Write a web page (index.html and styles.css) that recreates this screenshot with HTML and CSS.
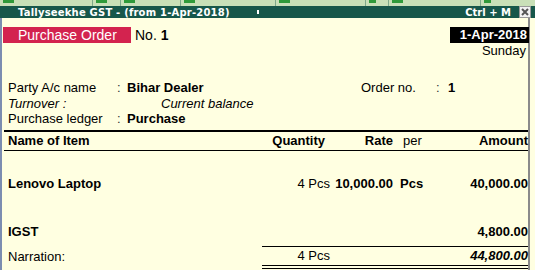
FILE: index.html
```html
<!DOCTYPE html>
<html>
<head>
<meta charset="utf-8">
<link rel="stylesheet" href="styles.css">
</head>
<body>
<div class="window">
  <div class="tabs">
    <span class="tab t1"><i></i></span>
    <span class="tab t2"><i></i></span>
    <span class="tab t3"><i></i></span>
    <span class="tab t4"><i></i></span>
    <span class="tab t5"><i></i></span>
    <span class="tab t6"><i></i></span>
    <span class="tab t7"><i></i></span>
    <span class="tab t8"><i></i></span>
  </div>
  <div class="titlebar">
    <span class="title">Tallyseekhe GST - (from 1-Apr-2018)</span>
    <span class="tick"></span>
    <span class="spacer"></span>
    <span class="shortcut">Ctrl + M</span>
    <span class="close">
      <svg width="10" height="10" viewBox="0 0 10 10"><path d="M2 2 L8 8 M8 2 L2 8" stroke="#555" stroke-width="2"/></svg>
    </span>
  </div>
  <div class="body">
    <div class="inner">
      <div class="headrow">
        <div class="vtype">Purchase Order</div>
        <div class="vno">No. <b>1</b></div>
        <div class="grow"></div>
        <div class="date">1-Apr-2018</div>
      </div>
      <div class="day">Sunday</div>

      <div class="fields">
        <div class="frow">
          <span class="label">Party A/c name</span><span class="colon">:</span><b class="val party">Bihar Dealer</b>
          <span class="label2">Order no.</span><span class="colon2">:</span><b>1</b>
        </div>
        <div class="frow r2">
          <i class="turn">Turnover :</i><i class="curbal">Current balance</i>
        </div>
        <div class="frow">
          <span class="label">Purchase ledger</span><span class="colon">:</span><b class="val">Purchase</b>
        </div>
      </div>

      <div class="thick"></div>
      <div class="grid head">
        <div class="c-name">Name of Item</div>
        <div class="c-qty hq">Quantity</div>
        <div class="c-rate">Rate</div>
        <div class="c-per hp">per</div>
        <div class="c-amt">Amount</div>
      </div>
      <div class="grid item">
        <div class="c-name b">Lenovo Laptop</div>
        <div class="c-qty">4 Pcs</div>
        <div class="c-rate b">10,000.00</div>
        <div class="c-per b">Pcs</div>
        <div class="c-amt b">40,000.00</div>
      </div>
      <div class="grid tax">
        <div class="c-name b">IGST</div>
        <div class="c-qty"></div>
        <div class="c-rate"></div>
        <div class="c-per"></div>
        <div class="c-amt b">4,800.00</div>
      </div>
      <div class="totalrow">
        <div class="narr">Narration:</div>
        <div class="totals">
          <div class="tq">4 Pcs</div>
          <div class="tamt">44,800.00</div>
        </div>
      </div>
    </div>
  </div>
</div>
</body>
</html>
```

FILE: styles.css
```css
* { box-sizing: border-box; }
html, body { margin: 0; padding: 0; }
body {
  width: 535px;
  height: 270px;
  overflow: hidden;
  background: #ffffe1;
  font-family: "Liberation Sans", Arial, sans-serif;
  font-size: 13px;
  color: #000;
}
.window { width: 535px; height: 270px; display: flex; flex-direction: column; }

.tabs { height: 6px; background: #c9e0b8; display: flex; }
.tab { height: 6px; border-left: 1px solid #7fa88a; display: flex; }
.tab i { display: block; width: 11px; height: 3px; margin-left: 3px; background: #2f9a3a; }
.t1 { width: 92px; border-left: none; }
.t2 { width: 28px; }
.t3 { width: 60px; }
.t4 { width: 95px; }
.t5 { width: 90px; }
.t6 { width: 23px; }
.t7 { width: 92px; }
.t8 { flex: 1; }
.t6 i { width: 7px; }
.t8 i { width: 7px; }

.titlebar {
  height: 12px;
  background: #17574a;
  display: flex;
  align-items: center;
  color: #fff;
  font-family: "DejaVu Sans", Verdana, sans-serif;
  font-weight: bold;
  font-size: 10px;
  padding-left: 18px;
  padding-right: 4px;
}
.title { white-space: nowrap; letter-spacing: 0.2px; }
.tick { width: 2px; height: 4px; background: #fff; margin-left: 27px; }
.spacer { flex: 1; }
.shortcut { white-space: nowrap; margin-right: 8px; }
.close {
  width: 12px; height: 12px;
  background: #f2f2f2;
  border: 1px solid #999;
  display: flex; align-items: center; justify-content: center;
}

.body {
  flex: 1;
  display: flex;
  border-left: 2px solid #7c8db0;
}
.inner {
  width: 528px;
  border-right: 2px solid #8a8a8a;
  display: flex;
  flex-direction: column;
}

.headrow { display: flex; height: 16px; margin-top: 9px; align-items: stretch; }
.vtype {
  width: 128px;
  margin-left: 1px;
  background: #d3234f;
  color: #fff;
  font-size: 14px;
  line-height: 16px;
  padding-left: 15px;
}
.vno { margin-left: 4px; font-size: 14px; line-height: 16px; }
.grow { flex: 1; }
.date {
  width: 79px;
  background: #000;
  color: #fff;
  font-weight: bold;
  font-size: 13px;
  line-height: 16px;
  text-align: right;
  padding-right: 2px;
  margin-right: -1px;
}
.day { text-align: right; padding-right: 2px; line-height: 15px; font-size: 13px; }

.fields { margin-top: 22px; display: flex; flex-direction: column; }
.frow { display: flex; height: 16px; line-height: 16px; padding-left: 6px; white-space: nowrap; }
.frow.r2 { height: 15px; line-height: 15px; }
.label { width: 109px; }
.colon { width: 10px; color: #333; }
.val { width: 234px; }
.label2 { width: 75px; }
.colon2 { width: 12px; color: #333; }
.turn { width: 153px; }

.thick { height: 2px; background: #000; margin: 3px 0 0 2px; }

.grid {
  display: grid;
  grid-template-columns: 254px 68px 63px 47px 88px;
  padding-left: 6px;
  white-space: nowrap;
}
.grid.head { height: 19px; line-height: 18px; font-weight: bold; border-bottom: 1px solid #000; margin-left: 2px; padding-left: 4px; }
.grid.item { margin-top: 25px; line-height: 16px; }
.grid.tax { margin-top: 32px; line-height: 16px; }
.c-qty, .c-rate, .c-amt { text-align: right; }
.c-per { padding-left: 7px; }
.hq { padding-right: 5px; }
.hp { font-weight: normal; padding-left: 10px; }
.b { font-weight: bold; }

.totalrow { display: flex; margin-top: 6px; }
.narr { width: 260px; padding-left: 6px; line-height: 18px; padding-top: 2px; }
.totals {
  flex: 1;
  display: flex;
  border-top: 1px solid #000;
  border-bottom: 4px double #000;
  height: 23px;
  line-height: 18px;
}
.tq { width: 68px; text-align: right; }
.tamt { flex: 1; text-align: right; font-weight: bold; font-style: italic; }
```
